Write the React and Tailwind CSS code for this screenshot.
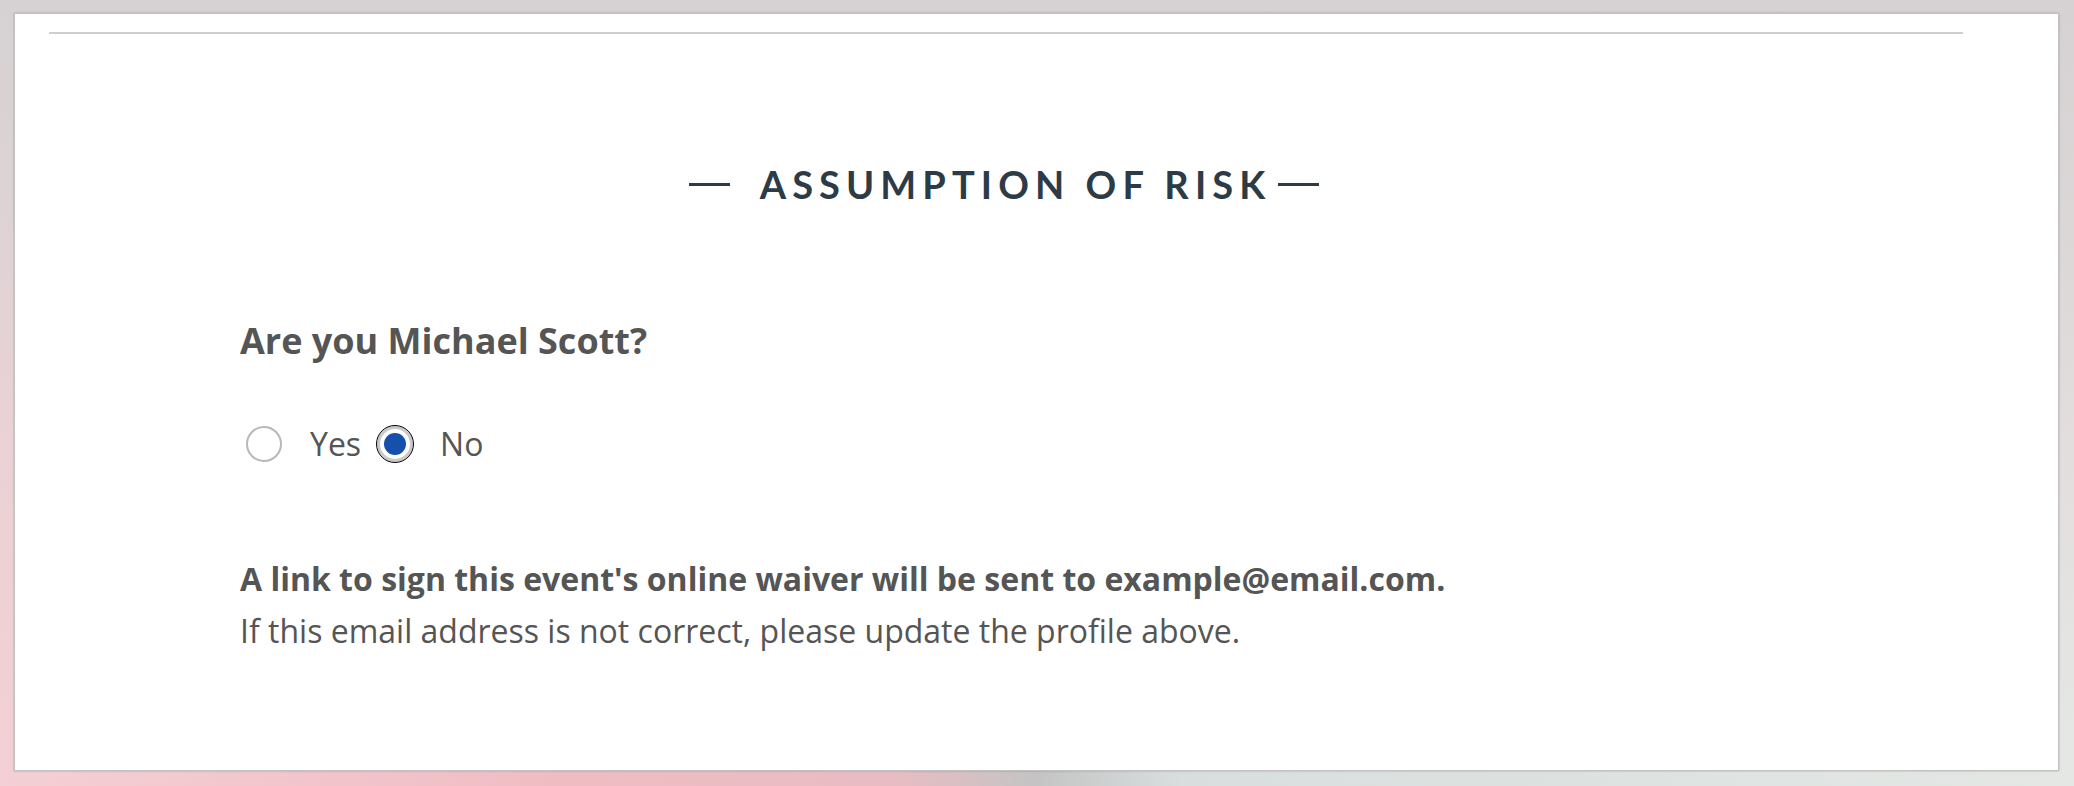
export default function App() {
  return (
    <div className="w-[2074px] h-[786px] pt-[13px] pl-[14px] pr-[15px] pb-[15px] bg-[linear-gradient(to_bottom,rgba(214,210,211,1)_0%,rgba(216,211,212,0.85)_25%,rgba(225,212,214,0.5)_55%,rgba(240,200,206,0)_95%),linear-gradient(to_right,#f3d0d5_0%,#f0bcc4_27%,#e8bcc3_43%,#c4c4c4_50%,#d8dede_57%,#e4e7e4_100%)]">
      <div className="h-full bg-white border border-[#c2c2c2] shadow-[0_0_2px_rgba(0,0,0,0.25)] flex flex-col">
        <div className="ml-[34px] mr-[95px] mt-[18px] flex flex-col">
          <div className="h-[2px] bg-[#cfcfcf]" />
          <div className="flex items-center justify-center mt-[131px] pr-[4px]">
            <span className="block w-[41px] h-[3px] bg-[#2d3b46]" />
            <h2
              className="ml-[30px] mr-[7px] text-[38px] leading-none tracking-[0.16em] font-bold text-[#2d3b46] whitespace-nowrap"
              style={{ fontFamily: 'Lato, "Open Sans", sans-serif' }}
            >
              ASSUMPTION OF RISK
            </h2>
            <span className="block w-[41px] h-[3px] bg-[#2d3b46]" />
          </div>
          <div
            className="ml-[191px] mt-[120px] text-[#555555]"
            style={{ fontFamily: '"Open Sans", "Liberation Sans", sans-serif' }}
          >
            <p className="text-[36px] leading-none font-bold">Are you Michael Scott?</p>
            <div className="flex items-center mt-[67px] text-[32px] leading-none">
              <span className="ml-[6px] block w-[36px] h-[36px] rounded-full border-2 border-[#b8b8b8] bg-white" />
              <span className="ml-[28px]">Yes</span>
              <span className="ml-[16px] flex items-center justify-center w-[36px] h-[36px] rounded-full border-[3px] border-[#c9c9c9] bg-white outline-[1.5px] outline-solid outline-black">
                <span className="block w-[22px] h-[22px] rounded-full bg-[#1750ab]" />
              </span>
              <span className="ml-[27px]">No</span>
            </div>
            <p className="mt-[93px] text-[32px] leading-[48px] font-bold">
              A link to sign this event's online waiver will be sent to example@email.com.
            </p>
            <p className="mt-[4px] text-[32px] leading-[48px]">
              If this email address is not correct, please update the profile above.
            </p>
          </div>
        </div>
      </div>
    </div>
  );
}
